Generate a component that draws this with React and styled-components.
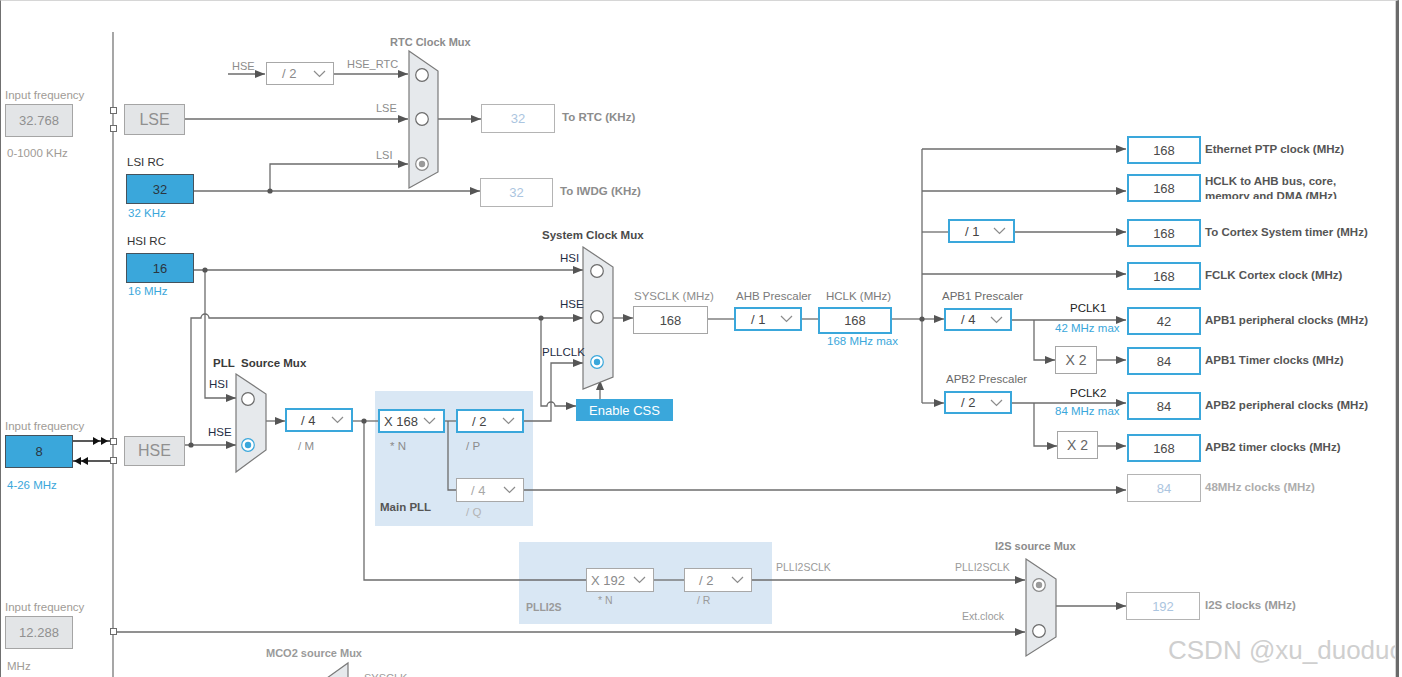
import React from "react";
import styled, { createGlobalStyle, css } from "styled-components";

const GlobalStyle = createGlobalStyle`
  html, body { margin: 0; padding: 0; background: #fff; overflow: hidden; }
  body { font-family: "Liberation Sans", Arial, sans-serif; }
`;

const BLUE = "#3aa7db";
const WIRE = "#6c6c6c";

const Page = styled.div`
  position: relative;
  width: 1402px;
  height: 677px;
  background: #fff;
  font-family: "Liberation Sans", Arial, sans-serif;
`;

const Board = styled.div`
  position: relative;
  width: 1396px;
  height: 677px;
  overflow: hidden;
`;

const Frame = styled.div`
  position: absolute;
  left: 0;
  top: 0;
  width: 1399px;
  height: 677px;
  box-sizing: border-box;
  border-top: 1px solid #d6d6d6;
  border-left: 1px solid #707070;
  border-right: 3px solid #6a6a6a;
  box-shadow: inset -1px 0 0 #d2d2d2;
  pointer-events: none;
`;

const Wires = styled.svg`
  position: absolute;
  left: 0;
  top: 0;
`;

const Label = styled.span`
  position: absolute;
  left: ${(p) => p.$x}px;
  top: ${(p) => p.$y - 8}px;
  line-height: 16px;
  font-size: ${(p) => p.$size || 11.5}px;
  font-weight: ${(p) => (p.$bold ? 700 : 400)};
  color: ${(p) => p.$color || "#8c8c8c"};
  white-space: nowrap;
`;

const WrapLabel = styled.div`
  position: absolute;
  left: ${(p) => p.$x}px;
  top: ${(p) => p.$y}px;
  width: 136px;
  height: 25px;
  overflow: hidden;
  line-height: 15px;
  font-size: 11.5px;
  font-weight: 700;
  color: #555;
`;

const Watermark = styled.span`
  position: absolute;
  left: 1168px;
  top: 634px;
  font-size: 26px;
  line-height: 32px;
  color: #cfcfcf;
  white-space: nowrap;
`;

const Panel = styled.div`
  position: absolute;
  left: ${(p) => p.$x}px;
  top: ${(p) => p.$y}px;
  width: ${(p) => p.$w}px;
  height: ${(p) => p.$h}px;
  background: #d9e7f4;
`;

const boxKinds = {
  blue: css`
    background: ${BLUE};
    border: 1px solid #45525c;
    color: #2b3640;
  `,
  gray: css`
    background: #e3e5e7;
    border: 1px solid #a5a5a5;
    color: #909090;
  `,
  out: css`
    background: #fff;
    border: 2px solid ${BLUE};
    color: #4a4a4a;
  `,
  plain: css`
    background: #fff;
    border: 1px solid #a5a5a5;
    color: #4a4a4a;
  `,
  dim: css`
    background: #fff;
    border: 1px solid #b4b4b4;
    color: #abc5e0;
  `,
};

const Box = styled.div`
  position: absolute;
  left: ${(p) => p.$x}px;
  top: ${(p) => p.$y}px;
  width: ${(p) => p.$w}px;
  height: ${(p) => p.$h}px;
  box-sizing: border-box;
  display: flex;
  align-items: center;
  justify-content: center;
  font-size: ${(p) => p.$size || 13}px;
  ${(p) => boxKinds[p.$kind]}
  ${(p) => p.$muted && "color: #666;"}
`;

const SelectBox = styled.div`
  position: absolute;
  left: ${(p) => p.$x}px;
  top: ${(p) => p.$y}px;
  width: ${(p) => p.$w || 68}px;
  height: ${(p) => p.$h || 24}px;
  box-sizing: border-box;
  display: flex;
  align-items: center;
  justify-content: space-between;
  padding: 0 7px 0 ${(p) => p.$pad || 13}px;
  background: #fff;
  font-size: 13px;
  border: ${(p) => (p.$active ? `2px solid ${BLUE}` : "1px solid #a8a8a8")};
  color: ${(p) => (p.$dim ? "#a8a8a8" : p.$active ? "#444" : "#8a8a8a")};
`;

const Chevron = ({ color }) => (
  <svg width="13" height="8" viewBox="0 0 13 8">
    <polyline points="1,1 6.5,6.5 12,1" fill="none" stroke={color} strokeWidth="1.2" />
  </svg>
);

const Select = ({ children, active, dim, ...rest }) => (
  <SelectBox $active={active} $dim={dim} {...rest}>
    <span>{children}</span>
    <Chevron color={dim ? "#c4c4c4" : "#8c8c8c"} />
  </SelectBox>
);

const CssButton = styled.div`
  position: absolute;
  left: 576px;
  top: 399px;
  width: 97px;
  height: 22px;
  background: ${BLUE};
  color: #fff;
  font-size: 13px;
  display: flex;
  align-items: center;
  justify-content: center;
`;

const Port = styled.div`
  position: absolute;
  left: ${(p) => p.$x}px;
  top: ${(p) => p.$y}px;
  width: 7px;
  height: 7px;
  box-sizing: border-box;
  background: #fff;
  border: 1px solid #6c6c6c;
`;

const Mux = ({ pts, rx, rys, sel, tone }) => (
  <g>
    <polygon points={pts} fill="#e6e9ec" stroke="#7a7a7a" strokeWidth="1.2" />
    {rys.map((y, i) => {
      const on = i === sel;
      const c = on ? (tone === "blue" ? BLUE : "#8a8a8a") : "#6c6c6c";
      return (
        <g key={y}>
          <circle cx={rx} cy={y} r="6.3" fill="#fff" stroke={c} strokeWidth="1.2" />
          {on && <circle cx={rx} cy={y} r="3.2" fill={tone === "blue" ? BLUE : "#9a9a9a"} />}
        </g>
      );
    })}
  </g>
);

const wires = [
  // RTC
  ["M228 74 H265", true],
  ["M334 74 H408", true],
  ["M185 119 H408", true],
  ["M194 191 H480", true],
  ["M270 191 V164 H408", true],
  ["M438 119 H481", true],
  // HSI / HSE
  ["M194 270 H583", true],
  ["M205 270 V398 H236", true],
  ["M191 445 V318 H201 A4 4 0 0 1 209 318 H583", true],
  ["M185 445 H236", true],
  ["M266 421 H285", true],
  // PLL
  ["M353 421 H378", false],
  ["M364 421 V580 H586", false],
  ["M445 421 H456", false],
  ["M448 421 V490 H456", false],
  ["M524 421 H551 V363 H583", true],
  ["M541 318 V406 H547 A4 4 0 0 1 555 406 H576", true],
  ["M600 399 V380", true],
  ["M524 490 H1126", true],
  // system
  ["M613 318 H633", true],
  ["M708 319 H734", false],
  ["M802 319 H818", false],
  ["M892 319 H922", false],
  ["M922 149 V403", false],
  ["M922 149 H1126", true],
  ["M922 191 H1126", true],
  ["M922 232 H948", false],
  ["M1015 232 H1126", true],
  ["M922 274 H1126", true],
  ["M922 319 H944", true],
  ["M922 403 H944", true],
  ["M1012 320 H1126", true],
  ["M1034 320 V360 H1055", true],
  ["M1097 360 H1126", true],
  ["M1012 403 H1126", true],
  ["M1034 403 V446 H1057", true],
  ["M1098 446 H1126", true],
  // I2S
  ["M654 580 H684", false],
  ["M752 580 H1025", true],
  ["M113 632 H1025", true],
  ["M1056 606 H1126", true],
];

const dots = [
  [270, 191],
  [205, 270],
  [191, 445],
  [364, 421],
  [541, 318],
  [922, 319],
];

const outputs = [
  [136, "168", "Ethernet PTP clock (MHz)"],
  [219, "168", "To Cortex System timer (MHz)"],
  [262, "168", "FCLK Cortex clock (MHz)"],
  [307, "42", "APB1 peripheral clocks (MHz)"],
  [347, "84", "APB1 Timer clocks (MHz)"],
  [392, "84", "APB2 peripheral clocks (MHz)"],
  [434, "168", "APB2 timer clocks (MHz)"],
];

const LABEL_IN = "#a09b96";
const DARK = "#333";
const NAVY = "#1f2d44";

export default function App() {
  return (
    <Page>
      <GlobalStyle />
      <Board>
        <Panel $x={375} $y={391} $w={158} $h={135} />
        <Panel $x={519} $y={542} $w={253} $h={82} />

        <Wires width="1402" height="677">
          <defs>
            <marker id="ar" viewBox="0 0 10 8" refX="10" refY="4" markerWidth="10" markerHeight="8" markerUnits="userSpaceOnUse" orient="auto">
              <path d="M0 0 L10 4 L0 8 Z" fill="#555" />
            </marker>
          </defs>
          <line x1="113" y1="32" x2="113" y2="677" stroke="#777" strokeWidth="1.3" />
          {wires.map(([d, arrow]) => (
            <path key={d} d={d} fill="none" stroke={WIRE} strokeWidth="1.3" markerEnd={arrow ? "url(#ar)" : undefined} />
          ))}
          {dots.map(([x, y]) => (
            <circle key={`${x}-${y}`} cx={x} cy={y} r="2.6" fill="#555" />
          ))}
          {/* HSE oscillator pins */}
          <line x1="73" y1="441" x2="110" y2="441" stroke="#222" strokeWidth="1.3" />
          <polygon points="93,437 100,441 93,445" fill="#111" />
          <polygon points="101,437 108,441 101,445" fill="#111" />
          <line x1="73" y1="461" x2="110" y2="461" stroke="#222" strokeWidth="1.3" />
          <polygon points="74,461 81,457 81,465" fill="#111" />
          <polygon points="81,461 88,457 88,465" fill="#111" />

          <Mux pts="409,51 438,71 438,172 409,188" rx={422} rys={[75, 119, 164]} sel={2} tone="gray" />
          <Mux pts="583,247 613,267 613,377 583,389" rx={597} rys={[271, 317, 362]} sel={2} tone="blue" />
          <Mux pts="236,374 266,394 266,450 236,472" rx={248} rys={[399, 445]} sel={1} tone="blue" />
          <Mux pts="1026,559 1056,579 1056,637 1026,656" rx={1039} rys={[585, 631]} sel={0} tone="gray" />
          <polygon points="327,678 348,663 348,678" fill="#e6e9ec" stroke="#7a7a7a" strokeWidth="1.2" />
        </Wires>

        <Port $x={110} $y={107} />
        <Port $x={110} $y={125} />
        <Port $x={110} $y={438} />
        <Port $x={110} $y={457} />
        <Port $x={110} $y={628} />

        {/* left column */}
        <Label $x={5} $y={95} $color={LABEL_IN}>Input frequency</Label>
        <Box $kind="gray" $x={5} $y={104} $w={68} $h={33}>32.768</Box>
        <Label $x={7} $y={153} $color={LABEL_IN}>0-1000 KHz</Label>

        <Box $kind="gray" $x={124} $y={104} $w={61} $h={31} $size={16}>LSE</Box>
        <Label $x={127} $y={162} $color={DARK}>LSI RC</Label>
        <Box $kind="blue" $x={126} $y={174} $w={68} $h={30}>32</Box>
        <Label $x={128} $y={213} $color={BLUE}>32 KHz</Label>

        <Label $x={127} $y={241} $color={DARK}>HSI RC</Label>
        <Box $kind="blue" $x={126} $y={253} $w={68} $h={30}>16</Box>
        <Label $x={128} $y={291} $color={BLUE}>16 MHz</Label>

        <Label $x={5} $y={426} $color={LABEL_IN}>Input frequency</Label>
        <Box $kind="blue" $x={5} $y={435} $w={68} $h={33}>8</Box>
        <Label $x={7} $y={485} $color={BLUE}>4-26 MHz</Label>
        <Box $kind="gray" $x={124} $y={436} $w={61} $h={30} $size={16}>HSE</Box>

        <Label $x={5} $y={607} $color={LABEL_IN}>Input frequency</Label>
        <Box $kind="gray" $x={5} $y={616} $w={68} $h={33}>12.288</Box>
        <Label $x={7} $y={666} $color={LABEL_IN}>MHz</Label>

        {/* RTC */}
        <Label $x={232} $y={66} $size={11}>HSE</Label>
        <Select $x={266} $y={62} $w={68} $h={23} $pad={15}>/ 2</Select>
        <Label $x={347} $y={64} $size={11}>HSE_RTC</Label>
        <Label $x={390} $y={42} $size={11} $bold>RTC Clock Mux</Label>
        <Label $x={376} $y={108} $size={11}>LSE</Label>
        <Label $x={376} $y={155} $size={11}>LSI</Label>
        <Box $kind="dim" $x={481} $y={104} $w={74} $h={29}>32</Box>
        <Label $x={562} $y={117} $bold>To RTC (KHz)</Label>
        <Box $kind="dim" $x={480} $y={178} $w={73} $h={29}>32</Box>
        <Label $x={560} $y={191} $bold>To IWDG (KHz)</Label>

        {/* PLL source */}
        <Label $x={213} $y={363} $bold $color="#3a3a3a">PLL&nbsp; Source Mux</Label>
        <Label $x={209} $y={384} $color={NAVY}>HSI</Label>
        <Label $x={208} $y={432} $color={NAVY}>HSE</Label>
        <Select $x={285} $y={408} $active $pad={14}>/ 4</Select>
        <Label $x={298} $y={446}>/ M</Label>

        {/* Main PLL */}
        <Select $x={378} $y={409} $w={67} $active $pad={4}>X 168</Select>
        <Label $x={390} $y={446}>* N</Label>
        <Select $x={456} $y={409} $active $pad={14}>/ 2</Select>
        <Label $x={466} $y={446}>/ P</Label>
        <Select $x={456} $y={478} $dim $pad={14}>/ 4</Select>
        <Label $x={466} $y={512} $color="#b4b4b4">/ Q</Label>
        <Label $x={380} $y={507} $bold $color="#555">Main PLL</Label>

        {/* System clock */}
        <Label $x={542} $y={235} $bold $color="#4a4a4a">System Clock Mux</Label>
        <Label $x={560} $y={258} $color={NAVY}>HSI</Label>
        <Label $x={560} $y={304} $color={NAVY}>HSE</Label>
        <Label $x={542} $y={352} $color={NAVY}>PLLCLK</Label>
        <CssButton>Enable CSS</CssButton>
        <Label $x={634} $y={296}>SYSCLK (MHz)</Label>
        <Box $kind="plain" $x={633} $y={306} $w={75} $h={28}>168</Box>
        <Label $x={736} $y={296} $color="#7a7a7a">AHB Prescaler</Label>
        <Select $x={734} $y={307} $active $pad={15}>/ 1</Select>
        <Label $x={826} $y={296} $color="#7a7a7a">HCLK (MHz)</Label>
        <Box $kind="out" $x={818} $y={307} $w={74} $h={27}>168</Box>
        <Label $x={827} $y={341} $color={BLUE}>168 MHz max</Label>

        {/* APB */}
        <Select $x={948} $y={219} $w={67} $active $pad={15}>/ 1</Select>
        <Label $x={942} $y={296} $color="#6a6a6a">APB1 Prescaler</Label>
        <Select $x={944} $y={308} $h={23} $active $pad={15}>/ 4</Select>
        <Label $x={1070} $y={308} $color="#222">PCLK1</Label>
        <Label $x={1055} $y={328} $color={BLUE}>42 MHz max</Label>
        <Box $kind="plain" $x={1055} $y={346} $w={42} $h={28} $size={14} $muted>X 2</Box>
        <Label $x={946} $y={379} $color="#6a6a6a">APB2 Prescaler</Label>
        <Select $x={944} $y={391} $h={23} $active $pad={15}>/ 2</Select>
        <Label $x={1070} $y={393} $color="#222">PCLK2</Label>
        <Label $x={1055} $y={411} $color={BLUE}>84 MHz max</Label>
        <Box $kind="plain" $x={1057} $y={431} $w={41} $h={28} $size={14} $muted>X 2</Box>

        {/* outputs */}
        {outputs.map(([y, v, t]) => (
          <React.Fragment key={t}>
            <Box $kind="out" $x={1127} $y={y} $w={74} $h={28}>{v}</Box>
            <Label $x={1205} $y={y + 13} $bold $color="#555">{t}</Label>
          </React.Fragment>
        ))}
        <Box $kind="out" $x={1127} $y={174} $w={74} $h={28}>168</Box>
        <WrapLabel $x={1205} $y={174}>HCLK to AHB bus, core, memory and DMA (MHz)</WrapLabel>
        <Box $kind="dim" $x={1127} $y={474} $w={74} $h={28}>84</Box>
        <Label $x={1205} $y={487} $bold $color="#adadad">48MHz clocks (MHz)</Label>

        {/* PLLI2S */}
        <Select $x={586} $y={568} $pad={4}>X 192</Select>
        <Label $x={598} $y={600} $size={10.5} $color="#9a9a9a">* N</Label>
        <Select $x={684} $y={568} $pad={14}>/ 2</Select>
        <Label $x={697} $y={600} $size={10.5} $color="#9a9a9a">/ R</Label>
        <Label $x={526} $y={607} $size={10.5} $bold $color="#9a9a9a">PLLI2S</Label>
        <Label $x={776} $y={567} $size={10.5} $color="#9a9a9a">PLLI2SCLK</Label>
        <Label $x={955} $y={567} $size={10.5} $color="#9a9a9a">PLLI2SCLK</Label>
        <Label $x={962} $y={616} $size={10.5} $color="#9a9a9a">Ext.clock</Label>
        <Label $x={995} $y={546} $size={11} $bold>I2S source Mux</Label>
        <Box $kind="dim" $x={1126} $y={592} $w={74} $h={28}>192</Box>
        <Label $x={1205} $y={605} $bold $color="#9a9a9a">I2S clocks (MHz)</Label>

        {/* MCO2 */}
        <Label $x={266} $y={653} $size={11} $bold $color="#9a9a9a">MCO2 source Mux</Label>
        <Label $x={364} $y={678} $size={11} $color="#9a9a9a">SYSCLK</Label>

        <Watermark>CSDN @xu_duoduo</Watermark>
      </Board>
      <Frame />
    </Page>
  );
}
